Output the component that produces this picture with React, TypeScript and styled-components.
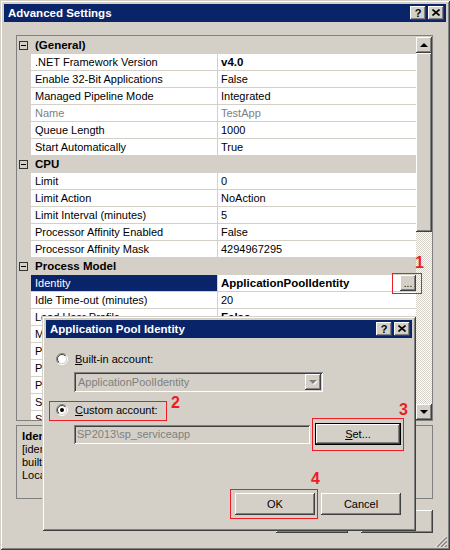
import React from "react";
import styled, { createGlobalStyle, css } from "styled-components";

const GRAY = "#d4d0c8";
const NAVY = "#0a246a";
const RED = "#ee1c25";

const GlobalStyle = createGlobalStyle`
  html, body {
    margin: 0;
    padding: 0;
    background: ${GRAY};
  }
  body {
    font-family: "Liberation Sans", Arial, sans-serif;
    font-size: 11px;
    color: #000;
  }
`;

const raised = css`
  background: ${GRAY};
  box-shadow: inset -1px -1px #404040, inset 1px 1px #fff, inset -2px -2px #808080, inset 2px 2px ${GRAY};
`;

const sunken = css`
  box-shadow: inset 1px 1px #808080, inset -1px -1px #fff, inset 2px 2px #404040, inset -2px -2px ${GRAY};
`;

const frame = css`
  box-sizing: border-box;
  padding: 4px;
  background: ${GRAY};
  box-shadow: inset 1px 1px ${GRAY}, inset -1px -1px #404040, inset 2px 2px #fff, inset -2px -2px #808080;
  display: flex;
  flex-direction: column;
`;

const Window = styled.div`
  ${frame}
  position: relative;
  width: 450px;
  height: 550px;
`;

const TitleBar = styled.div`
  height: 18px;
  flex: none;
  background: ${NAVY};
  color: #fff;
  display: flex;
  align-items: center;
  padding: 0 2px;
`;

const Title = styled.span`
  flex: 1;
  padding-left: 2px;
  font-weight: bold;
  font-size: 11.5px;
  white-space: nowrap;
`;

const CaptionButtons = styled.div`
  display: flex;
  gap: 2px;
`;

const CaptionButton = styled.div`
  ${raised}
  width: 16px;
  height: 14px;
  display: flex;
  align-items: center;
  justify-content: center;
  color: #000;
  font-weight: bold;
  font-size: 11px;
  line-height: 14px;
  padding-bottom: 1px;
  box-sizing: border-box;
`;

const Body = styled.div`
  padding: 13px 13px 0 12px;
  display: flex;
  flex-direction: column;
`;

const PropertyGrid = styled.div`
  height: 386px;
  box-sizing: border-box;
  border: 1px solid #808080;
  padding-top: 1px;
  display: flex;
  background: ${GRAY};
  overflow: hidden;
`;

const Rows = styled.div`
  flex: 1;
  overflow: hidden;
`;

const CategoryRow = styled.div`
  height: 16px;
  margin-bottom: 1px;
  display: flex;
  align-items: center;
  font-weight: bold;
  font-size: 11.5px;
`;

const Expander = styled.div`
  position: relative;
  width: 9px;
  height: 9px;
  box-sizing: border-box;
  border: 1px solid #333;
  margin-left: 2px;
  margin-right: 7px;
  &::after {
    content: "";
    position: absolute;
    left: 1px;
    right: 1px;
    top: 3px;
    height: 1px;
    background: #000;
  }
`;

const PropRow = styled.div`
  height: 16px;
  margin-bottom: 1px;
  display: grid;
  grid-template-columns: 14px 186px 1fr;
  white-space: nowrap;
`;

const NameCell = styled.div<{ $selected?: boolean; $muted?: boolean }>`
  grid-column: 2;
  background: ${(p) => (p.$selected ? NAVY : "#fff")};
  color: ${(p) => (p.$selected ? "#fff" : p.$muted ? "#808080" : "#000")};
  padding-left: 4px;
  line-height: 16px;
  overflow: hidden;
`;

const ValueCell = styled.div<{ $bold?: boolean; $muted?: boolean }>`
  margin-left: 1px;
  background: #fff;
  padding-left: 3px;
  display: flex;
  align-items: center;
  justify-content: space-between;
  line-height: 16px;
  overflow: hidden;
  font-weight: ${(p) => (p.$bold ? "bold" : "normal")};
  font-size: ${(p) => (p.$bold ? "11.5px" : "11px")};
  color: ${(p) => (p.$muted ? "#808080" : "#000")};
`;

const BrowseButton = styled.div`
  ${raised}
  width: 16px;
  height: 16px;
  flex: none;
  font-size: 10px;
  line-height: 18px;
  text-align: center;
  font-weight: normal;
`;

const Scrollbar = styled.div`
  width: 16px;
  display: flex;
  flex-direction: column;
`;

const ScrollButton = styled.div`
  ${raised}
  height: 16px;
  flex: none;
  display: flex;
  align-items: center;
  justify-content: center;
`;

const Arrow = styled.div<{ $down?: boolean }>`
  width: 0;
  height: 0;
  border-left: 4px solid transparent;
  border-right: 4px solid transparent;
  ${(p) => (p.$down ? "border-top: 4px solid #000;" : "border-bottom: 4px solid #000;")}
`;

const Thumb = styled.div`
  ${raised}
  height: 179px;
  flex: none;
`;

const Track = styled.div`
  flex: 1;
  background: repeating-conic-gradient(#fff 0% 25%, ${GRAY} 0% 50%) 0 0 / 2px 2px;
`;

const Description = styled.div`
  margin-top: 4px;
  height: 74px;
  box-sizing: border-box;
  border: 1px solid #808080;
  padding: 4px 5px;
  line-height: 13px;
  white-space: nowrap;
  overflow: hidden;
  b {
    font-size: 11.5px;
  }
`;

const ButtonBar = styled.div<{ $gap: number; $top: number }>`
  display: flex;
  justify-content: flex-end;
  gap: ${(p) => p.$gap}px;
  margin-top: ${(p) => p.$top}px;
`;

const Button = styled.div<{ $w: number; $h: number; $default?: boolean }>`
  ${raised}
  width: ${(p) => p.$w}px;
  height: ${(p) => p.$h}px;
  box-sizing: border-box;
  display: flex;
  align-items: center;
  justify-content: center;
  font-size: 11px;
  ${(p) =>
    p.$default &&
    css`
      border: 1px solid #000;
    `}
`;

const Grip = styled.svg`
  position: absolute;
  right: 3px;
  bottom: 3px;
`;

const Dialog = styled.div`
  ${frame}
  position: absolute;
  left: 42px;
  top: 316px;
  width: 374px;
  height: 215px;
`;

const DialogBody = styled.div`
  padding: 15px 11px 0 10px;
  display: flex;
  flex-direction: column;
`;

const RadioRow = styled.div<{ $top: number }>`
  height: 12px;
  margin-top: ${(p) => p.$top}px;
  display: flex;
  align-items: center;
  gap: 7px;
  white-space: nowrap;
`;

const Field = styled.div<{ $w: number; $h: number; $top?: number }>`
  ${sunken}
  width: ${(p) => p.$w}px;
  height: ${(p) => p.$h}px;
  box-sizing: border-box;
  margin: ${(p) => p.$top ?? 0}px 0 0 18px;
  background: ${GRAY};
  color: #808080;
  display: flex;
  align-items: center;
  padding-left: 3px;
  white-space: nowrap;
`;

const ComboText = styled.span`
  flex: 1;
  padding-left: 1px;
`;

const ComboButton = styled.div`
  ${raised}
  width: 16px;
  height: 16px;
  margin-right: 2px;
  display: flex;
  align-items: center;
  justify-content: center;
`;

const DisabledArrow = styled.div`
  width: 0;
  height: 0;
  border-left: 4px solid transparent;
  border-right: 4px solid transparent;
  border-top: 4px solid #808080;
  filter: drop-shadow(1px 1px 0 #fff);
`;

const FieldRow = styled.div`
  margin-top: 7px;
  height: 22px;
  display: flex;
  align-items: center;
  justify-content: space-between;
`;

const MarkBox = styled.div<{ $x: number; $y: number; $w: number; $h: number }>`
  position: absolute;
  left: ${(p) => p.$x}px;
  top: ${(p) => p.$y}px;
  width: ${(p) => p.$w}px;
  height: ${(p) => p.$h}px;
  box-sizing: border-box;
  border: 1px solid ${RED};
`;

const MarkNumber = styled.div<{ $x: number; $y: number }>`
  position: absolute;
  left: ${(p) => p.$x}px;
  top: ${(p) => p.$y}px;
  color: ${RED};
  font-weight: bold;
  font-size: 16px;
  line-height: 16px;
`;

type Prop = {
  name: string;
  value: string;
  bold?: boolean;
  muted?: boolean;
  selected?: boolean;
  browse?: boolean;
};

type Category = { title: string; props: Prop[] };

const categories: Category[] = [
  {
    title: "(General)",
    props: [
      { name: ".NET Framework Version", value: "v4.0", bold: true },
      { name: "Enable 32-Bit Applications", value: "False" },
      { name: "Managed Pipeline Mode", value: "Integrated" },
      { name: "Name", value: "TestApp", muted: true },
      { name: "Queue Length", value: "1000" },
      { name: "Start Automatically", value: "True" },
    ],
  },
  {
    title: "CPU",
    props: [
      { name: "Limit", value: "0" },
      { name: "Limit Action", value: "NoAction" },
      { name: "Limit Interval (minutes)", value: "5" },
      { name: "Processor Affinity Enabled", value: "False" },
      { name: "Processor Affinity Mask", value: "4294967295" },
    ],
  },
  {
    title: "Process Model",
    props: [
      { name: "Identity", value: "ApplicationPoolIdentity", bold: true, selected: true, browse: true },
      { name: "Idle Time-out (minutes)", value: "20" },
      { name: "Load User Profile", value: "False", bold: true },
      { name: "Maximum Worker Processes", value: "1" },
      { name: "Ping Enabled", value: "True" },
      { name: "Ping Maximum Response Time (seconds)", value: "90" },
      { name: "Ping Period (seconds)", value: "30" },
      { name: "Shutdown Time Limit (seconds)", value: "90" },
      { name: "Startup Time Limit (seconds)", value: "90" },
    ],
  },
];

const CloseGlyph = () => (
  <svg width="8" height="7" viewBox="0 0 8 7">
    <path d="M0.5 0.5 L7.5 6.5 M7.5 0.5 L0.5 6.5" stroke="#000" strokeWidth="1.6" />
  </svg>
);

const Caption = ({ title }: { title: string }) => (
  <TitleBar>
    <Title>{title}</Title>
    <CaptionButtons>
      <CaptionButton>?</CaptionButton>
      <CaptionButton>
        <CloseGlyph />
      </CaptionButton>
    </CaptionButtons>
  </TitleBar>
);

const Radio = ({ checked }: { checked?: boolean }) => (
  <svg width="12" height="12" viewBox="0 0 12 12">
    <defs>
      <linearGradient id="radioOuter" x1="0" y1="0" x2="1" y2="1">
        <stop offset="0.5" stopColor="#808080" />
        <stop offset="0.5" stopColor="#fff" />
      </linearGradient>
      <linearGradient id="radioInner" x1="0" y1="0" x2="1" y2="1">
        <stop offset="0.5" stopColor="#404040" />
        <stop offset="0.5" stopColor={GRAY} />
      </linearGradient>
    </defs>
    <circle cx="6" cy="6" r="5.5" fill="none" stroke="url(#radioOuter)" />
    <circle cx="6" cy="6" r="4.5" fill="#fff" stroke="url(#radioInner)" />
    {checked && <circle cx="6" cy="6" r="2" fill="#000" />}
  </svg>
);

const SizeGrip = () => (
  <Grip width="12" height="12" viewBox="0 0 12 12">
    {[1, 5, 9].map((k) => (
      <g key={k}>
        <line x1={12} y1={k - 0.5} x2={k - 0.5} y2={12} stroke="#fff" />
        <line x1={12} y1={k + 1} x2={k + 1} y2={12} stroke="#808080" strokeWidth="1.5" />
      </g>
    ))}
  </Grip>
);

const App = () => (
  <>
    <GlobalStyle />
    <Window>
      <Caption title="Advanced Settings" />
      <Body>
        <PropertyGrid>
          <Rows>
            {categories.map((cat) => (
              <React.Fragment key={cat.title}>
                <CategoryRow>
                  <Expander />
                  {cat.title}
                </CategoryRow>
                {cat.props.map((p) => (
                  <PropRow key={p.name}>
                    <NameCell $selected={p.selected} $muted={p.muted}>
                      {p.name}
                    </NameCell>
                    <ValueCell $bold={p.bold} $muted={p.muted}>
                      {p.value}
                      {p.browse && <BrowseButton>...</BrowseButton>}
                    </ValueCell>
                  </PropRow>
                ))}
              </React.Fragment>
            ))}
          </Rows>
          <Scrollbar>
            <ScrollButton>
              <Arrow />
            </ScrollButton>
            <Thumb />
            <Track />
            <ScrollButton>
              <Arrow $down />
            </ScrollButton>
          </Scrollbar>
        </PropertyGrid>
        <Description>
          <b>Identity</b>
          <br />
          [identityType, username, password] Configures the application pool to run as
          <br />
          built-in account, i.e. Application Pool Identity (recommended), Network Service,
          <br />
          Local System, Local Service, or as a specific user identity.
        </Description>
        <ButtonBar $gap={13} $top={11}>
          <Button $w={72} $h={23}>OK</Button>
          <Button $w={72} $h={23}>Cancel</Button>
        </ButtonBar>
      </Body>
      <SizeGrip />

      <MarkBox $x={392} $y={273} $w={30} $h={21} />
      <MarkNumber $x={415} $y={255}>1</MarkNumber>

      <Dialog>
        <Caption title="Application Pool Identity" />
        <DialogBody>
          <RadioRow $top={0}>
            <Radio />
            <span>
              <u>B</u>uilt-in account:
            </span>
          </RadioRow>
          <Field $w={249} $h={20} $top={7}>
            <ComboText>ApplicationPoolIdentity</ComboText>
            <ComboButton>
              <DisabledArrow />
            </ComboButton>
          </Field>
          <RadioRow $top={12}>
            <Radio checked />
            <span>
              <u>C</u>ustom account:
            </span>
          </RadioRow>
          <FieldRow>
            <Field $w={236} $h={19}>SP2013\sp_serviceapp</Field>
            <Button $w={86} $h={22} $default>
              <span>
                <u>S</u>et...
              </span>
            </Button>
          </FieldRow>
          <ButtonBar $gap={6} $top={48}>
            <Button $w={80} $h={22}>OK</Button>
            <Button $w={80} $h={22}>Cancel</Button>
          </ButtonBar>
        </DialogBody>
      </Dialog>

      <MarkBox $x={49} $y={401} $w={118} $h={20} />
      <MarkNumber $x={171} $y={395}>2</MarkNumber>
      <MarkBox $x={312} $y={418} $w={92} $h={33} />
      <MarkNumber $x={399} $y={402}>3</MarkNumber>
      <MarkBox $x={230} $y={489} $w={88} $h={30} />
      <MarkNumber $x={311} $y={471}>4</MarkNumber>
    </Window>
  </>
);

export default App;
